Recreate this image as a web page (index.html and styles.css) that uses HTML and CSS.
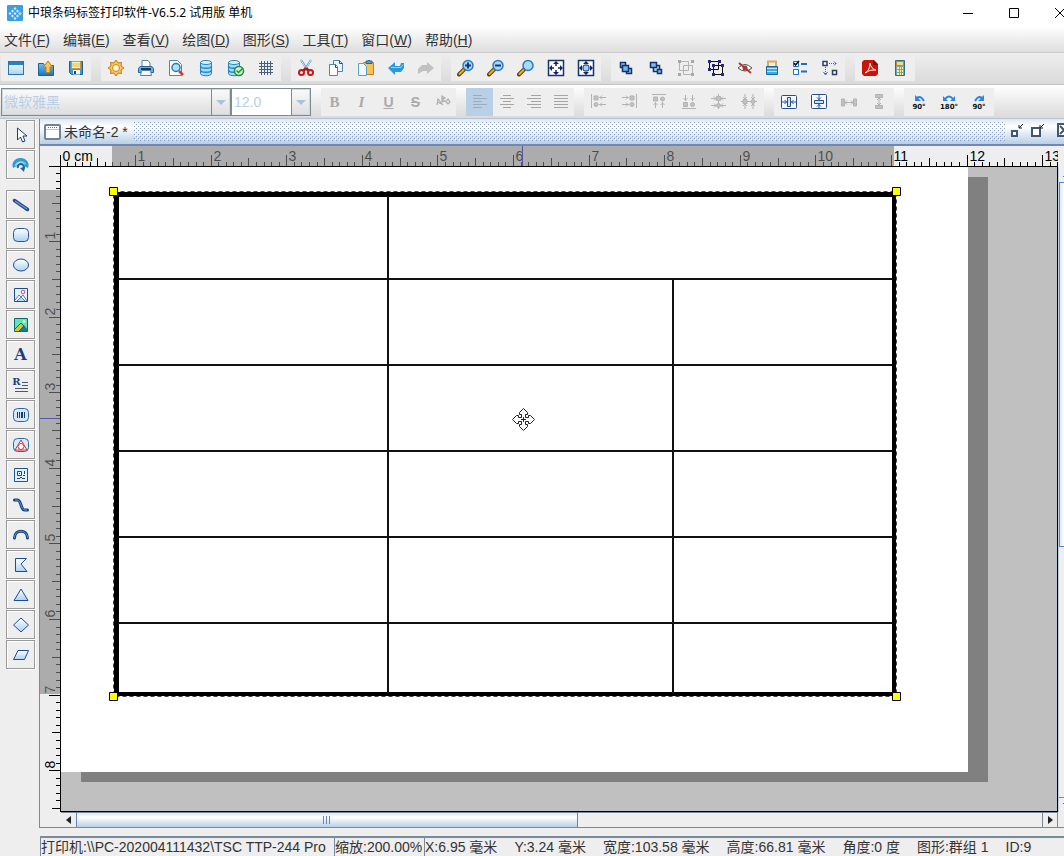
FILE: index.html
```html
<!DOCTYPE html>
<html lang="zh-CN">
<head>
<meta charset="utf-8">
<title>中琅条码标签打印软件-V6.5.2 试用版 单机</title>
<link rel="stylesheet" href="styles.css">
</head>
<body>
<svg class="defs" aria-hidden="true">
  <defs>
    <linearGradient id="sky" x1="0" y1="0" x2="0" y2="1"><stop offset="0" stop-color="#ffffff"/><stop offset="1" stop-color="#a9d2f3"/></linearGradient>
    <linearGradient id="blue" x1="0" y1="0" x2="0" y2="1"><stop offset="0" stop-color="#6fc3f5"/><stop offset="1" stop-color="#1673c0"/></linearGradient>
    <pattern id="bumps" width="4" height="4" patternUnits="userSpaceOnUse"><path fill="#8a9fc6" d="M0 0h1v1H0zM2 2h1v1H2z"/><path fill="#fff" d="M1 1h1v1H1zM3 3h1v1H3z"/></pattern>
    <g id="lens"><path d="M2 15.500 7 10.500" stroke="#5b4208" stroke-width="4" stroke-linecap="round"/><path d="M2.500 15 6.500 11" stroke="#e5ad2b" stroke-width="2" stroke-linecap="round"/><circle cx="11" cy="6.500" r="5" fill="#a6dcfb" stroke="#2d79bd" stroke-width="1.500"/></g>
  </defs>
</svg>
<div class="app">
  <header class="titlebar">
    <svg class="logo" viewBox="0 0 16 16"><rect width="16" height="16" rx="1" fill="#3a9fe6"/><g fill="#d5efff"><path d="m8 2 1.500 1.500L8 5 6.500 3.500zM5.500 4.500 7 6 5.500 7.500 4 6zM10.500 4.500 12 6l-1.500 1.500L9 6zM3 7l1.500 1.500L3 10 1.500 8.500zM8 7l1.500 1.500L8 10 6.500 8.500zM5.500 9.500 7 11l-1.500 1.500L4 11zM10.500 9.500 12 11l-1.500 1.500L9 11zM8 12l1.500 1.500L8 15l-1.500-1.500z"/></g><path fill="#e5d36d" d="m13 6.500 1.800 2-1.800 2-1.800-2z"/></svg>
    <h1 class="title">中琅条码标签打印软件-V6.5.2 试用版 单机</h1>
    <div class="winbtns">
      <button aria-label="最小化"><svg viewBox="0 0 10 10"><path d="M0 5.500h10" stroke="#000"/></svg></button>
      <button aria-label="最大化"><svg viewBox="0 0 10 10"><path d="M.5.500h9v9h-9z" fill="none" stroke="#000"/></svg></button>
      <button aria-label="关闭"><svg viewBox="0 0 10 10"><path d="m0 0 10 10M10 0 0 10" stroke="#000"/></svg></button>
    </div>
  </header>

  <nav class="menubar">
    <button>文件(<u>F</u>)</button><button>编辑(<u>E</u>)</button><button>查看(<u>V</u>)</button><button>绘图(<u>D</u>)</button><button>图形(<u>S</u>)</button><button>工具(<u>T</u>)</button><button>窗口(<u>W</u>)</button><button>帮助(<u>H</u>)</button>
  </nav>

  <div class="toolbar main">
    <div class="group">
      <button aria-label="新建"><svg class="i" viewBox="0 0 18 18"><rect x="1.500" y="2.500" width="15" height="13" fill="url(#sky)" stroke="#2673ad"/><path fill="#2681c8" d="M2 3h14v3H2z"/></svg></button>
      <button aria-label="打开"><svg class="i" viewBox="0 0 18 18"><path d="M1.500 16.500v-12h5l1 2h9v10z" fill="url(#blue)" stroke="#1b6396"/><path d="M9 13.500V8H6.500L11 2l4.500 6H13v5.500z" fill="#ffc653" stroke="#c07a17"/></svg></button>
      <button aria-label="保存"><svg class="i" viewBox="0 0 18 18"><path d="M2.500 2.500h13v13h-11l-2-2z" fill="#3b9be0" stroke="#215e94"/><path d="M4.500 2.500h9v7h-9z" fill="#fff3c0" stroke="#c49b3a"/><path d="M5 5h8M5 7h8" stroke="#e0b44f"/><path d="M6 11h7v4.500H6z" fill="#f7f7f7"/><path d="M7 12h2v3H7z" fill="#174c7c"/></svg></button>
    </div>
    <div class="group">
      <button aria-label="设置"><svg class="i" viewBox="0 0 18 18"><path d="m9 1 2 3 3.500-.5L14 7l3 2-3 2 .5 3.500L11 14l-2 3-2-3-3.500.5L4 11 1 9l3-2-.5-3.500L7 4z" fill="#ffc45a" stroke="#bf7a1b"/><circle cx="9" cy="9" r="3.500" fill="#fff1c8" stroke="#cb861c"/><circle cx="9" cy="9" r="1" fill="#fff"/></svg></button>
      <button aria-label="打印"><svg class="i" viewBox="0 0 18 18"><path d="M5 8V1.500h6L13 4v4" fill="#fff" stroke="#5c7fa5"/><path d="M3 7.500h12l1.500 2v4h-15v-4z" fill="#5eb4ee" stroke="#23659c"/><path d="M4 10h10" stroke="#153e68" stroke-width="2"/><path d="M4.500 11.500h9l1 5h-11z" fill="#f4faff" stroke="#5c7fa5"/></svg></button>
      <button aria-label="打印预览"><svg class="i" viewBox="0 0 18 18"><path d="M2.500 1.500h8l4 4v11h-12z" fill="#fff" stroke="#4989b8"/><circle cx="9" cy="8.500" r="4" fill="#b4e2fb" stroke="#2479b5" stroke-width="1.500"/><path d="m12 12 4 4" stroke="#d53a31" stroke-width="2.500"/></svg></button>
      <button aria-label="数据库"><svg class="i" viewBox="0 0 18 18"><path d="M3.500 3.500v11c0 3 11 3 11 0v-11" fill="#a3dbfb" stroke="#2a81bd"/><path d="M3.500 7c0 3 11 3 11 0m-11 4c0 3 11 3 11 0" fill="none" stroke="#2385c9" stroke-width="1.500"/><ellipse cx="9" cy="3.500" rx="5.500" ry="2" fill="#d8f3ff" stroke="#2a81bd"/></svg></button>
      <button aria-label="数据源"><svg class="i" viewBox="0 0 18 18"><path d="M1.500 3.500v11c0 3 11 3 11 0v-11" fill="#a3dbfb" stroke="#2a81bd"/><path d="M1.500 7c0 3 11 3 11 0m-11 4c0 3 11 3 11 0" fill="none" stroke="#2385c9" stroke-width="1.500"/><ellipse cx="7" cy="3.500" rx="5.500" ry="2" fill="#d8f3ff" stroke="#2a81bd"/><circle cx="12" cy="12" r="4.500" fill="#d6f7d4" stroke="#1b8f3c" stroke-width="1.500"/><path d="m9.500 11.500 2 2 4-4" fill="none" stroke="#139a35" stroke-width="1.500"/></svg></button>
      <button aria-label="网格"><svg class="i" viewBox="0 0 18 18"><path d="M2 4.500h14M2 7.500h14M2 10.500h14M2 13.500h14M4.500 2v14M7.500 2v14M10.500 2v14M13.500 2v14" stroke="#46607b"/></svg></button>
    </div>
    <div class="group">
      <button aria-label="剪切"><svg class="i" viewBox="0 0 18 18"><path d="m4 1 7 11M14 1 7 12" stroke="#5387b5" stroke-width="2"/><path d="m4 1 6 10M14 1 8 11" stroke="#d9efff"/><path d="M9 9 6 12M9 9l3 3" stroke="#b31313" stroke-width="2.500"/><circle cx="4.500" cy="13.500" r="2.500" fill="none" stroke="#c31818" stroke-width="2"/><circle cx="13.500" cy="13.500" r="2.500" fill="none" stroke="#c31818" stroke-width="2"/></svg></button>
      <button aria-label="复制"><svg class="i" viewBox="0 0 18 18"><path d="M6.500 1.500h6l3 3v8h-9z" fill="#eaf6ff" stroke="#5685ad"/><path d="M2.500 5.500h6l2 2v9h-8z" fill="#fff" stroke="#5685ad"/><path d="M8.500 5.500v3h2M12.500 1.500v3h3" fill="none" stroke="#254c7c"/></svg></button>
      <button aria-label="粘贴"><svg class="i" viewBox="0 0 18 18"><path d="M6.500 3.500h10v12h-10z" fill="#ffc24d" stroke="#bc8122"/><path d="M9 4.500V2h2l1-1 1 1h2v2.500z" fill="#579ac8" stroke="#2f668e"/><path d="M1.500 4.500h5l3 3v9h-8z" fill="#f2fbff" stroke="#5aa3d0"/></svg></button>
      <button aria-label="撤销"><svg class="i" viewBox="0 0 18 18"><path d="m1 9 7-6v4h5l1-3h3v5l-3 4H8v3z" fill="#2b97dd"/><path d="M4 8.500h10l2-3" fill="none" stroke="#8dd4fb"/></svg></button>
      <button aria-label="重做"><svg class="i" viewBox="0 0 18 18"><path d="m17 9-7-6v3H5L1 10v5l5-3h4v3z" fill="#c1c1c1"/></svg></button>
    </div>
    <div class="group">
      <button aria-label="放大"><svg class="i" viewBox="0 0 18 18"><use href="#lens"/><path d="M8 6.500h6M11 3.500v6" stroke="#14377f" stroke-width="2"/></svg></button>
      <button aria-label="缩小"><svg class="i" viewBox="0 0 18 18"><use href="#lens"/><path d="M8 6.500h6" stroke="#14377f" stroke-width="2"/></svg></button>
      <button aria-label="缩放"><svg class="i" viewBox="0 0 18 18"><use href="#lens"/></svg></button>
      <button aria-label="适合页面"><svg class="i" viewBox="0 0 18 18"><path d="M1.500 1.500h15v15h-15z" fill="#fff" stroke="#15366f" stroke-width="1.500"/><path fill="#13206d" d="m9 2 3 3H6zM9 16l-3-3h6zM2 9l3-3v6zM16 9l-3 3V6z"/><path stroke="#13206d" stroke-width="1.500" d="M9 4v3M9 11v3M4 9h3M11 9h3"/></svg></button>
      <button aria-label="适合图形"><svg class="i" viewBox="0 0 18 18"><path d="M1.500 1.500h15v15h-15z" fill="#fff" stroke="#15366f" stroke-width="1.500"/><path fill="#13206d" d="m9 2 3 3H6zM9 16l-3-3h6zM2 9l3-3v6zM16 9l-3 3V6z"/><rect x="6" y="6" width="6" height="6" rx="2" fill="#9fd4f5" stroke="#13206d"/></svg></button>
    </div>
    <div class="group">
      <button aria-label="置于顶层"><svg class="i" viewBox="0 0 18 18"><path d="M3.500 3.500h5v5h-5zM9.500 9.500h5v5h-5z" fill="#8cc8f5" stroke="#16316a" stroke-width="1.500"/><path d="M5.500 6.500h6v6h-6z" fill="#6ab8f3" stroke="#16316a" stroke-width="1.500"/></svg></button>
      <button aria-label="置于底层"><svg class="i" viewBox="0 0 18 18"><path d="M6.500 6.500h6v6h-6z" fill="#b9defa" stroke="#16316a" stroke-width="1.500"/><path d="M3.500 3.500h6v5h-6zM10.500 10.500h4v4h-4z" fill="#73bff7" stroke="#16316a" stroke-width="1.500"/></svg></button>
      <button aria-label="组合" disabled><svg class="i" viewBox="0 0 18 18"><path d="M2.500 2.500h9v9h-9zM6.500 6.500h9v9h-9z" fill="none" stroke="#b4b4b4"/><path fill="#a8a8a8" d="M1 1h3v3H1zM14 1h3v3h-3zM1 14h3v3H1zM14 14h3v3h-3z"/></svg></button>
      <button aria-label="取消组合"><svg class="i" viewBox="0 0 18 18"><path d="M2.500 2.500h9v8h-9zM6.500 6.500h9v9h-9z" fill="none" stroke="#111"/><path fill="#2c2778" d="M1 1h3v3H1zM11 1h3v3h-3zM1 9h3v3H1zM5 14h3v3H5zM14 5h3v3h-3zM14 14h3v3h-3zM5 5h3v3H5z"/></svg></button>
      <button class="narrow" aria-label="隐藏"><svg class="i" viewBox="0 0 18 18"><path d="M2 9q7-7 14 0-7 6-14 0z" fill="#fff" stroke="#4e4e4e"/><circle cx="9" cy="9" r="2.500" fill="#515c64"/><path d="m3 4 12 10" stroke="#cc2828" stroke-width="2"/></svg></button>
      <button class="narrow" aria-label="锁定"><svg class="i" viewBox="0 0 18 18"><path d="M5 8V2.500h8V8" fill="none" stroke="#e0a854" stroke-width="2"/><path d="M3.500 7.500h11v8h-11z" fill="#48a6e1" stroke="#176a9e"/><path d="M4 9.500h10M4 12.500h10" stroke="#b8e5ff"/></svg></button>
      <button aria-label="选项"><svg class="i" viewBox="0 0 18 18"><path d="M2.500 2.500h5v5h-5zM2.500 10.500h5v5h-5z" fill="#fff" stroke="#1476cf"/><path d="m3 4 1.500 2L8 2" fill="none" stroke="#111" stroke-width="1.500"/><path d="M10 5h6M10 12.500h6" stroke="#246cbb" stroke-width="2"/></svg></button>
      <button aria-label="次序"><svg class="i" viewBox="0 0 18 18"><path d="M2 2.500h4v4H2zM11.500 11.500h4v4h-4z" fill="#fff" stroke="#2d3f5e" stroke-width="1.500"/><path d="M8 4.500h7M4.500 8v7" stroke="#3d65bb" stroke-dasharray="1 1"/><path d="m13 2.500 2 2-2 2M2.500 13l2 3 2-3" fill="none" stroke="#3d65bb"/></svg></button>
    </div>
    <div class="group">
      <button aria-label="导出PDF"><svg class="i" viewBox="0 0 18 18"><path d="M3 1h10l4 4v10l-2 2H3l-2-2V3z" fill="#c9140b"/><path d="M12 1v5h5" fill="#7d0804"/><path d="M4 14q5-3 5-10 1 6 6 7-6-1-11 3z" fill="none" stroke="#fff"/></svg></button>
      <button aria-label="计算器"><svg class="i" viewBox="0 0 18 18"><path d="M4.500 1.500h9v15h-9z" fill="#76a5ae" stroke="#2d6f90"/><path fill="#ffd86e" stroke="#bd8c2a" d="M5.500 2.500h7v4h-7z"/><path d="M6 9h2M9 9h1M11 9h1M6 12h2M9 12h1M11 12h1M6 15h2M9 15h1M11 15h1" stroke="#ffed9a" stroke-width="2"/></svg></button>
    </div>
  </div>

  <div class="toolbar format">
    <div class="combos">
      <span class="combo font"><select aria-label="字体" disabled><option>微软雅黑</option></select></span>
      <span class="combo size"><select aria-label="字号" disabled><option>12.0</option></select></span>
    </div>
    <div class="group tight">
      <button class="glyph" disabled><b>B</b></button>
      <button class="glyph" disabled><i>I</i></button>
      <button class="glyph sans" disabled><u>U</u></button>
      <button class="glyph sans" disabled><s>S</s></button>
      <button aria-label="字符间距" disabled><svg class="i" viewBox="0 0 18 18"><g fill="none" stroke="#adadad" stroke-width="1.200"><path d="m3 12 1-6 4 5-5-2M8 9V3l3 2-3 1 3 2-3 1M14 6l-2 3 2 2 2-2z"/></g></svg></button>
    </div>
    <div class="group tight">
      <button class="on" aria-label="左对齐" disabled><svg class="i" viewBox="0 0 18 18"><path d="M2 2.500h9M2 5.500h14M2 8.500h9M2 11.500h14M2 14.500h9" stroke="#9dadbb"/></svg></button>
      <button aria-label="居中" disabled><svg class="i" viewBox="0 0 18 18"><path d="M5 2.500h8M2 5.500h14M5 8.500h8M2 11.500h14M5 14.500h8" stroke="#a5a5a5"/></svg></button>
      <button aria-label="右对齐" disabled><svg class="i" viewBox="0 0 18 18"><path d="M6 2.500h10M2 5.500h14M6 8.500h10M2 11.500h14M6 14.500h10" stroke="#a5a5a5"/></svg></button>
      <button aria-label="两端对齐" disabled><svg class="i" viewBox="0 0 18 18"><path d="M2 2.500h14M2 5.500h14M2 8.500h14M2 11.500h14M2 14.500h14" stroke="#a5a5a5"/></svg></button>
    </div>
    <div class="group gray">
      <button aria-label="图形左对齐" disabled><svg class="i" viewBox="0 0 18 18"><path d="M1.500 1v14M9 4.500h7M12 2.500l-2 2 2 2M9 11.500h7m-4-2-2 2 2 2"/><path class="f" d="M4 3h4v4H4z"/><circle class="f" cx="6" cy="11.500" r="2"/></svg></button>
      <button aria-label="图形右对齐" disabled><svg class="i" viewBox="0 0 18 18"><path d="M16.500 1v14M2 4.500h7M6 2.500l2 2-2 2M2 11.500h7M6 9.500l2 2-2 2"/><path class="f" d="M10 3h4v4h-4z"/><circle class="f" cx="12" cy="11.500" r="2"/></svg></button>
      <button aria-label="图形上对齐" disabled><svg class="i" viewBox="0 0 18 18"><path d="M2 1.500h14M5.500 9v6M3.500 12l2-2 2 2M12.500 9v6m-2-3 2-2 2 2"/><path class="f" d="M3.500 4h4v4h-4z"/><circle class="f" cx="12.500" cy="6" r="2"/></svg></button>
      <button aria-label="图形下对齐" disabled><svg class="i" viewBox="0 0 18 18"><path d="M2 15.500h14M5.500 2v6M3.500 5l2 2 2-2M12.500 2v6M10.500 5l2 2 2-2"/><path class="f" d="M3.500 9.500h4v4h-4z"/><circle class="f" cx="12.500" cy="11.500" r="2"/></svg></button>
      <button aria-label="水平居中" disabled><svg class="i" viewBox="0 0 18 18"><path d="M8.500 1v15M1 5.500h5M4 3.500l2 2-2 2M16 5.500h-5m2-2-2 2 2 2M1 12.500h5m10 0h-5M4 10.500l2 2-2 2M13 10.500l-2 2 2 2"/><path class="f" d="M6.500 3.500h4v4h-4z"/><circle class="f" cx="8.500" cy="12.500" r="2"/></svg></button>
      <button aria-label="垂直居中" disabled><svg class="i" viewBox="0 0 18 18"><path d="M1 8.500h16M5 1v5M3 4l2 2 2-2M5 16v-5m-2 2 2-2 2 2M13 1v5m-2-2 2 2 2-2M13 16v-5m-2 2 2-2 2 2"/><path class="f" d="M3 6.500h4v4H3z"/><circle class="f" cx="13" cy="8.500" r="2"/></svg></button>
    </div>
    <div class="group">
      <button aria-label="页面水平居中"><svg class="i" viewBox="0 0 18 18"><rect x="1.500" y="2.500" width="15" height="13" rx="1" fill="#f5f9ff" stroke="#2b4d80"/><path d="M7.500 4.500h3v9h-3z" fill="#c7e7ff" stroke="#2b4d80"/><path d="M2 9h5M16 9h-5M4.500 7l2 2-2 2M13.500 7l-2 2 2 2" fill="none" stroke="#235bb1"/></svg></button>
      <button aria-label="页面垂直居中"><svg class="i" viewBox="0 0 18 18"><rect x="1.500" y="1.500" width="15" height="14" rx="1" fill="#f5f9ff" stroke="#2b4d80"/><path d="M4.500 7.500h9v3h-9z" fill="#c7e7ff" stroke="#2b4d80"/><path d="M9 2v5M9 15v-4M7 4.500l2 2 2-2M7 13.500l2-2 2 2" fill="none" stroke="#235bb1"/></svg></button>
      <button class="g" aria-label="水平等距" disabled><svg class="i" viewBox="0 0 18 18"><path class="f" d="M1.500 6h3v7h-3zM13.500 6h3v7h-3z"/><path d="M5 9.500h8M7 7.500l-2 2 2 2M11 7.500l2 2-2 2"/></svg></button>
      <button class="g" aria-label="垂直等距" disabled><svg class="i" viewBox="0 0 18 18"><path class="f" d="M5.500 1.500h7v3h-7zM5.500 12.500h7v3h-7z"/><path d="M9 4v9M7 7l2-2 2 2M7 10l2 2 2-2"/></svg></button>
    </div>
    <div class="group rotate">
      <button><svg class="i" viewBox="0 0 18 8"><path d="M6 5q4-5 8 2" fill="none" stroke="#3184df" stroke-width="2"/><path fill="#3184df" d="M5 1v6h6z"/></svg><span>90°</span></button>
      <button><svg class="i" viewBox="0 0 18 8"><path d="M5 5q4-5 8 0" fill="none" stroke="#3184df" stroke-width="2"/><path fill="#3184df" d="M3 2v5h5zM15 2v5h-5z"/></svg><span>180°</span></button>
      <button><svg class="i" viewBox="0 0 18 8"><path d="M5 7q4-7 8-2" fill="none" stroke="#3184df" stroke-width="2"/><path fill="#3184df" d="M14 1v6H8z"/></svg><span>90°</span></button>
    </div>
  </div>

  <main class="workspace">
    <aside class="palette">
      <button aria-label="选择"><svg class="i" viewBox="0 0 18 18"><path d="M5.500 2v12l3-3 2 5 2.500-1-2-5h4z" fill="#fff" stroke="#173f7c"/></svg></button>
      <button class="last" aria-label="旋转"><svg class="i" viewBox="0 0 18 18"><path d="M3 11a6 5 0 1 1 11 0" fill="none" stroke="#2f9bd5" stroke-width="4"/><path d="M3 10a6 5 0 0 1 11-2" fill="none" stroke="#a1dbf5"/><path d="M6 12a3 3 0 1 1 5 1" fill="none" stroke="#1a6a9f" stroke-width="2"/><path d="m8 12 5-1-1 5z" fill="#1a6a9f"/></svg></button>
      <button aria-label="直线"><svg class="i" viewBox="0 0 18 18"><path d="m2.500 4.500 13 9" stroke="#24498a" stroke-width="3.500" stroke-linecap="round"/><path d="m3 5 12 8" stroke="#6f9ad0" stroke-width="1.300"/></svg></button>
      <button aria-label="圆角矩形"><svg class="i" viewBox="0 0 18 18"><rect x="1.500" y="2.500" width="15" height="13" rx="4" fill="url(#sky)" stroke="#2a549c"/></svg></button>
      <button aria-label="椭圆"><svg class="i" viewBox="0 0 18 18"><ellipse cx="9" cy="9" rx="7.500" ry="6" fill="url(#sky)" stroke="#224b93"/></svg></button>
      <button aria-label="图片"><svg class="i" viewBox="0 0 18 18"><path d="M2.500 2.500h13v13h-13z" fill="#e3f1ff" stroke="#224b93"/><path d="m3 14 4-5 2 2 2-2 4 6" fill="#fff" stroke="#4a7abb"/><path d="m5 15 4-4 4 4" fill="#c2dcf5" stroke="#4a7abb"/><circle cx="11" cy="6" r="1.800" fill="#fff" stroke="#bd5278"/></svg></button>
      <button aria-label="图库"><svg class="i" viewBox="0 0 18 18"><path d="M2.500 2.500h13v13h-13z" fill="#5ce5ba" stroke="#126b69"/><path d="m3 13 6-6 3 3-5 5H3z" fill="#d6c52e"/><path d="m7 15 5-6 3 4v2z" fill="#187b9a"/><path d="m3 13 6-6 3 3-5 5" fill="none" stroke="#126b69"/><circle cx="12" cy="5.500" r="1.500" fill="#e6ffa2"/></svg></button>
      <button class="letter a">A</button>
      <button class="letter r" aria-label="富文本"><span>R</span><svg class="i" viewBox="0 0 18 18"><path d="M10 6.500h6M10 9.500h6M3 12.500h13M3 15.500h13" stroke="#4f5865"/></svg></button>
      <button aria-label="条形码"><svg class="i" viewBox="0 0 18 18"><rect x="1.500" y="2.500" width="15" height="13" rx="4" fill="#d5e9fb" stroke="#2c67a9"/><path d="M5.500 6v6M7.500 6v6M12.500 6v6" stroke="#193b68"/><path d="M10 6v6" stroke="#193b68" stroke-width="2"/></svg></button>
      <button aria-label="图形条码"><svg class="i" viewBox="0 0 18 18"><rect x="1.500" y="2.500" width="15" height="13" rx="4" fill="#d5e9fb" stroke="#2c67a9"/><path d="M9 4 3 14h12z" fill="#fff" stroke="#dc3036"/><circle cx="9" cy="10.500" r="3" fill="#fff" stroke="#dc3036"/></svg></button>
      <button aria-label="二维码"><svg class="i" viewBox="0 0 18 18"><path d="M2.500 2.500h13v13h-13z" fill="#e1f1ff" stroke="#225591"/><path d="M5.500 5.500h4v4h-4zM7 7.500h1M12.500 5v3M11 9.500h2M5 12.500h3M10 12.500h3M8 11.500h2" fill="none" stroke="#1d4575"/></svg></button>
      <button aria-label="曲线"><svg class="i" viewBox="0 0 18 18"><path d="M2.500 4h3c4 0 3 10 7 10h3" fill="none" stroke="#173f80" stroke-width="3" stroke-linecap="round"/><path d="M3 4h2c4 0 4 10 8 10h2" fill="none" stroke="#6795d3"/></svg></button>
      <button aria-label="圆弧"><svg class="i" viewBox="0 0 18 18"><path d="M2.500 12c0-9 13-9 13 0" fill="none" stroke="#173f80" stroke-width="3" stroke-linecap="round"/><path d="M2.500 12c0-9 13-9 13 0" fill="none" stroke="#6795d3"/></svg></button>
      <button aria-label="多边形"><svg class="i" viewBox="0 0 18 18"><path d="M3.500 2.500h11L9 8l6 7.500H3.500z" fill="url(#sky)" stroke="#224b93"/></svg></button>
      <button aria-label="三角形"><svg class="i" viewBox="0 0 18 18"><path d="M9 3 2 14.500h14z" fill="url(#sky)" stroke="#224b93"/></svg></button>
      <button aria-label="菱形"><svg class="i" viewBox="0 0 18 18"><path d="M9 2 1.500 9 9 16l7.500-7z" fill="url(#sky)" stroke="#224b93"/></svg></button>
      <button aria-label="平行四边形"><svg class="i" viewBox="0 0 18 18"><path d="M6 4.500h10.500l-4 9H1.500z" fill="url(#sky)" stroke="#224b93"/></svg></button>
    </aside>

    <section class="frame">
      <div class="frame-title">
        <svg class="i" viewBox="0 0 18 18"><rect x="1" y="2" width="15" height="14" rx="1" fill="#fff" stroke="#718394" stroke-width="2"/><path d="M4 4.500h10" stroke="#587496" stroke-dasharray="1 1"/><path d="M2 6.500h13" stroke="#b2c6dc"/></svg>
        <h2>未命名-2 *</h2>
        <svg class="bumps"><rect width="100%" height="100%" fill="url(#bumps)"/></svg>
        <div class="frame-btns">
          <button aria-label="图标化"><svg viewBox="0 0 16 16"><path d="M2 9h5v5H2z" fill="#fff" stroke="#405673" stroke-width="2"/><path d="M13 2 9 6V3m0 3h3" fill="none" stroke="#222"/></svg></button>
          <button aria-label="最大化窗口"><svg viewBox="0 0 16 16"><path d="M2 6h8v8H2z" fill="#fff" stroke="#405673" stroke-width="2"/><path d="m14 2-4 4V3m0 3h3" fill="none" stroke="#222"/></svg></button>
          <button aria-label="关闭窗口"><svg viewBox="0 0 16 16"><path d="M2 2h12v12H2z" fill="#fff" stroke="#405673" stroke-width="2"/><path d="m4 4 8 8M12 4l-8 8" stroke="#405673" stroke-width="2"/></svg></button>
        </div>
      </div>
      <div class="frame-body">
        <svg class="ruler top" id="ruler-x"></svg>
        <svg class="ruler side" id="ruler-y"></svg>
        <div class="canvas">
          <div class="sheet">
            <svg class="drawing" viewBox="0 0 794 516" width="794" height="516">
              <rect x="7.500" y="7.500" width="778" height="500" fill="#fff" stroke="#000" stroke-width="5"/>
              <path d="M279 9v498M564 92v415M9 92h775M9 178h775M9 264h775M9 350h775M9 436h775" stroke="#111" stroke-width="2"/>
              <rect x="4.500" y="4.500" width="783" height="505" fill="none" stroke="#fff"/>
              <rect x="4.500" y="4.500" width="783" height="505" fill="none" stroke="#444" stroke-dasharray="4 3"/>
              <path d="M.5.500h8v8h-8zM783.500.500h8v8h-8zM.5 505.500h8v8h-8zM783.500 505.500h8v8h-8z" fill="#ff0" stroke="#000"/>
            </svg>
            <svg class="cursor" viewBox="0 0 23 23"><path d="m11.500.5-4 4v2h2v3h-3v-2h-2l-4 4 4 4h2v-2h3v3h-2v2l4 4 4-4v-2h-2v-3h3v2h2l4-4-4-4h-2v2h-3v-3h2v-2z" fill="#fff" stroke="#222"/><path d="M11.500 9v5M9 11.500h5" stroke="#222"/></svg>
          </div>
        </div>
        <div class="vscroll">
          <button class="up" aria-label="向上滚动"></button><div class="thumb"></div><div class="track"></div><button class="down" aria-label="向下滚动"></button>
        </div>
        <div class="hscroll">
          <button class="left" aria-label="向左滚动"></button><div class="thumb"><i></i><i></i><i></i></div><div class="track"></div><button class="right" aria-label="向右滚动"></button>
        </div>
      </div>
    </section>
  </main>

  <footer class="status">
    <span class="cell printer">打印机:\\PC-202004111432\TSC TTP-244 Pro</span>
    <span class="cell zoom">缩放:200.00%</span>
    <div class="cell info"><span>X:6.95 毫米</span><span>Y:3.24 毫米</span><span>宽度:103.58 毫米</span><span>高度:66.81 毫米</span><span>角度:0 度</span><span>图形:群组 1</span><span>ID:9</span></div>
  </footer>
</div>
<script src="script.js"></script>
</body>
</html>
```

FILE: styles.css
```css
* { box-sizing: border-box; }
body { margin: 0; background: #eee; color: #333; font: 14px/20px "Liberation Sans", "Noto Sans CJK SC", sans-serif; }
button { margin: 0; padding: 0; border: 0; background: none; color: inherit; font: inherit; }
.defs { position: absolute; width: 0; height: 0; }
.i { display: block; width: 18px; height: 18px; flex: none; }
.app { display: flex; flex-direction: column; height: 100vh; overflow: hidden; }

.titlebar { display: flex; align-items: center; height: 26px; padding-left: 7px; background: #fff; flex: none; overflow: hidden; }
.logo { width: 16px; height: 16px; flex: none; }
.title { flex: 1; margin: 0 0 0 5px; color: #000; font: 12px/20px "Noto Sans", "Noto Sans CJK SC", sans-serif; white-space: nowrap; }
.winbtns { display: flex; gap: 36px; margin-right: -1px; }
.winbtns button { width: 10px; height: 10px; }
.winbtns svg { display: block; width: 10px; height: 10px; }

.menubar { display: flex; gap: 13px; align-items: center; height: 27px; padding: 2px 4px 0; border-bottom: 1px solid #ccc; background: linear-gradient(#fff, #dedede); flex: none; white-space: nowrap; }

.toolbar { display: flex; gap: 10px; height: 32px; padding: 1px 0 3px; border-bottom: 1px solid #c4c4c4; background: linear-gradient(#eee, #dadada); flex: none; }
.toolbar .group { display: flex; background: #eee; }
.toolbar button { display: flex; align-items: center; justify-content: center; width: 30px; }
.toolbar .narrow, .toolbar .tight button { width: 27px; }
.toolbar.main { padding-left: 1px; }
.toolbar.format { height: 34px; padding: 3px 0 2px; border-bottom-color: #b9c3cf; background: linear-gradient(#fff, #dadada); }
.toolbar .on { background: #b8cfe5; }
.format .glyph { color: #aaa; font: bold 15px/20px "Liberation Serif", serif; }
.format .sans { font: bold 14px/20px "Liberation Sans", sans-serif; }
.gray svg, .g svg { fill: none; stroke: #b3b3b3; }
.gray .f, .g .f { fill: #c2c2c2; }
.rotate button { flex-direction: column; gap: 1px; color: #111; font: bold 7px/8px "DejaVu Sans", sans-serif; }
.rotate .i { height: 8px; }

.combos { display: flex; width: 311px; padding-left: 1px; }
.combo { position: relative; display: flex; border: 1px solid #7a8a99; box-shadow: inset 0 0 0 1px #cfd8e0; }
.combo.font { flex: 1; }
.combo.size { width: 80px; }
.combo select { flex: 1; min-width: 0; padding: 0 2px; border: 0; appearance: none; background: transparent; color: #b8cfe5; opacity: 1; font: inherit; }
.combo.size select { background: #fff; margin-right: 19px; }
.combo::before { content: ""; position: absolute; top: 0; bottom: 0; right: 18px; border-left: 1px solid #7a8a99; }
.combo::after { content: ""; position: absolute; top: 11px; right: 4px; border: 5px solid transparent; border-top-color: #a9c3de; border-bottom: 0; }

.workspace { display: grid; grid-template-columns: 39px minmax(0, 1fr); flex: 1; min-height: 0; }
.palette { display: flex; flex-direction: column; gap: 1px; padding: 1px 0 0 6px; }
.palette button { display: flex; align-items: center; justify-content: center; width: 29px; height: 29px; border: 1px solid #9b9b9b; box-shadow: inset 1px 1px #fff, 1px 1px #fff; flex: none; }
.palette .last { margin-bottom: 10px; }
.palette .letter { color: #1c3f7c; font: bold 16px/20px "DejaVu Serif", "Liberation Serif", serif; }
.palette .r { display: grid; grid-template: 1fr / 1fr; place-items: center; }
.palette .r > * { grid-area: 1 / 1; }
.palette .r span { padding: 0 8px 5px 0; font-size: 10px; line-height: 12px; }

.frame { display: flex; flex-direction: column; min-width: 0; margin-bottom: 8px; border-left: 1px solid #7a8a99; border-bottom: 1px solid #7a8a99; }
.frame-title { display: flex; align-items: center; height: 27px; padding-left: 4px; border-bottom: 2px solid #7088b5; background: linear-gradient(#dde8f2, #fff 30%, #b8cfe5); overflow: hidden; flex: none; }
.frame-title h2 { margin: 0 6px 0 2px; font: inherit; white-space: nowrap; }
.bumps { flex: 1; min-width: 0; height: 19px; }
.frame-btns { display: flex; gap: 4px; margin: 0 -8px 4px 4px; flex: none; }
.frame-btns svg { display: block; width: 16px; height: 16px; }
.frame-btns button + button + button { margin-left: 6px; }
.frame-body { display: grid; grid-template: 21px minmax(0, 1fr) 15px / 21px minmax(0, 1fr) 6px; flex: 1; min-height: 0; }

.ruler { display: block; width: 100%; height: 100%; min-width: 0; min-height: 0; overflow: hidden; font: 14px "Liberation Sans", sans-serif; }
.ruler .line { fill: none; stroke: #000; }
.ruler text { fill: #000; }
.ruler .span { fill: #808080; fill-opacity: .6; }
.ruler .mark { fill: #5555a5; }
.top { grid-area: 1 / 1 / 2 / 3; }
.side { grid-area: 2 / 1; }

.canvas { grid-area: 2 / 2; isolation: isolate; overflow: hidden; border: solid #000; border-width: 0 1px 1px 0; background: #c0c0c0; }
.sheet { position: relative; width: 907px; height: 605px; background: #fff; }
.sheet::before { content: ""; position: absolute; z-index: -1; left: 20px; top: 10px; width: 100%; height: 100%; background: #808080; }
.drawing { position: absolute; left: 48px; top: 20px; }
.cursor { position: absolute; left: 451px; top: 241px; width: 23px; height: 23px; }

.hscroll { grid-area: 3 / 2; display: flex; border-top: 1px solid #7a8a99; border-right: 1px solid #7a8a99; }
.hscroll .thumb { display: flex; align-items: center; justify-content: center; gap: 1px; width: 502px; border: solid #6382bf; border-width: 0 1px; background: linear-gradient(#dbe7f3, #fff 30%, #b8cfe5); }
.thumb i { width: 1px; height: 8px; margin-right: 1px; background: #6382bf; }
.track { flex: 1; }
.hscroll button, .vscroll button { display: flex; align-items: center; justify-content: center; }
.hscroll button { width: 15px; flex: none; }
.hscroll .right { border-left: 1px solid #7a8a99; }
.left::before, .right::before { content: ""; border: 4px solid transparent; }
.left::before { border-right: 5px solid #222; border-left: 0; }
.right::before { border-left: 5px solid #222; border-right: 0; }
.vscroll { grid-area: 2 / 3; display: flex; flex-direction: column; overflow: hidden; border-left: 1px solid #b8cfe5; }
.vscroll button { width: 15px; height: 15px; flex: none; }
.vscroll .thumb { height: 365px; width: 15px; border: 1px solid #6382bf; background: linear-gradient(90deg, #dbe7f3, #fff 30%, #b8cfe5); }
.vscroll .down { border-top: 1px solid #7a8a99; }
.up::before, .down::before { content: ""; border: 4px solid transparent; }
.up::before { border-bottom: 5px solid #222; border-top: 0; }
.down::before { border-top: 5px solid #222; border-bottom: 0; }

.status { display: flex; height: 20px; margin-left: 40px; border-top: 2px solid #7a8a99; overflow: hidden; line-height: 18px; white-space: nowrap; flex: none; }
.status .cell { border-left: 1px solid #7a8a99; }
.printer { width: 294px; flex: none; overflow: hidden; }
.zoom { width: 90px; flex: none; overflow: hidden; }
.info { display: flex; gap: 17px; flex: 1; }
```

FILE: script.js
```js
const NS = "http://www.w3.org/2000/svg";
const PX_PER_CM = 192 / 2.54;

function add(parent, name, attrs, text) {
  const el = document.createElementNS(NS, name);
  for (const key in attrs) el.setAttribute(key, attrs[key]);
  if (text !== undefined) el.textContent = text;
  parent.appendChild(el);
}

function tickLength(i) {
  if (i % 10 === 0) return 11;
  return i % 5 === 0 ? 8 : 4;
}

// Offset in pixels of the i-th millimetre tick.
function offset(i) {
  return Math.floor(i * PX_PER_CM / 10);
}

// Horizontal ruler: origin sits at the right edge of the vertical ruler.
function drawTop(svg) {
  const width = svg.getBoundingClientRect().width;
  let path = `M9 20.5H${width}`;
  for (let i = 0; 20 + offset(i) < width; i++) {
    const x = 20 + offset(i) + 0.5;
    path += `M${x} 20v-${tickLength(i)}`;
    if (i % 10 === 0) add(svg, "text", { x: x + 2, y: 15 }, i === 0 ? "0 cm" : i / 10);
  }
  add(svg, "path", { class: "line", d: path });
  add(svg, "rect", { class: "span", x: 72, y: 0, width: 782, height: 20 });
  add(svg, "rect", { class: "mark", x: 482, y: 0, width: 1, height: 20 });
}

// Vertical ruler: origin sits on the horizontal ruler's base line.
function drawSide(svg) {
  const height = svg.getBoundingClientRect().height;
  let path = `M20.5 0V${height}`;
  for (let i = 1; offset(i) < height; i++) {
    const y = offset(i) - 0.5;
    path += `M20 ${y}h-${tickLength(i)}`;
    if (i % 10 === 0) add(svg, "text", { transform: `translate(15 ${y - 2}) rotate(-90)` }, i / 10);
  }
  add(svg, "path", { class: "line", d: path });
  add(svg, "rect", { class: "span", x: 0, y: 23, width: 20, height: 504 });
  add(svg, "rect", { class: "mark", x: 0, y: 251, width: 20, height: 1 });
}

function redraw() {
  const top = document.getElementById("ruler-x");
  const side = document.getElementById("ruler-y");
  top.replaceChildren();
  side.replaceChildren();
  drawTop(top);
  drawSide(side);
}

redraw();
window.addEventListener("resize", redraw);
```
